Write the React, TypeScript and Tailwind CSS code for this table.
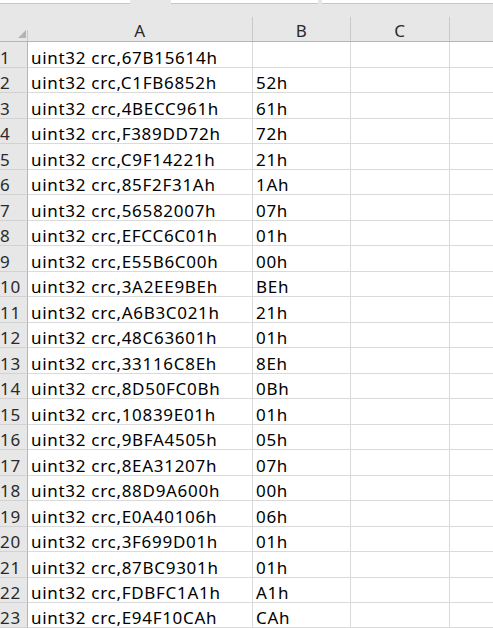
import React from "react";

const rows: [string, string][] = [
  ["67B15614h", ""],
  ["C1FB6852h", "52h"],
  ["4BECC961h", "61h"],
  ["F389DD72h", "72h"],
  ["C9F14221h", "21h"],
  ["85F2F31Ah", "1Ah"],
  ["56582007h", "07h"],
  ["EFCC6C01h", "01h"],
  ["E55B6C00h", "00h"],
  ["3A2EE9BEh", "BEh"],
  ["A6B3C021h", "21h"],
  ["48C63601h", "01h"],
  ["33116C8Eh", "8Eh"],
  ["8D50FC0Bh", "0Bh"],
  ["10839E01h", "01h"],
  ["9BFA4505h", "05h"],
  ["8EA31207h", "07h"],
  ["88D9A600h", "00h"],
  ["E0A40106h", "06h"],
  ["3F699D01h", "01h"],
  ["87BC9301h", "01h"],
  ["FDBFC1A1h", "A1h"],
  ["E94F10CAh", "CAh"],
];

const font = { fontFamily: '"Noto Sans", "Liberation Sans", sans-serif' };

// small divider between column headings, starts part way down
const HeadDivider = () => <div className="w-px h-[24px] self-end bg-[#c9c9c9]" />;

const App: React.FC = () => {
  return (
    <div className="w-[493px] h-[628px] overflow-hidden bg-white" style={font}>
      {/* strip above the headings */}
      <div className="flex h-[4px] bg-[#e7e7e7]">
        <div className="w-[130px] bg-white border-b border-[#c6c6c6]" />
        <div className="w-[41px]" />
        <div className="w-[147px] bg-white border-b border-[#c6c6c6]" />
        <div className="w-[4px]" />
        <div className="flex-1 bg-white border-b border-[#c6c6c6]" />
      </div>

      {/* column headings */}
      <div className="flex h-[38px] bg-[#e7e7e7] border-b border-[#b5b5b5] text-[17px] text-[#2a2a2a] tracking-[0.7px]">
        <div className="w-[27px] flex items-end justify-end pb-[2px]">
          <svg width="10" height="10" viewBox="0 0 10 10">
            <polygon points="1,9 9,9 9,1" fill="#b3b3b3" />
          </svg>
        </div>
        <div className="w-px h-[11px] self-end bg-[#c9c9c9]" />
        <div className="w-[224px] flex items-end justify-center pb-[1px] leading-[18px]">A</div>
        <HeadDivider />
        <div className="w-[97px] flex items-end justify-center pb-[1px] leading-[18px]">B</div>
        <HeadDivider />
        <div className="w-[98px] flex items-end justify-center pb-[1px] leading-[18px]">C</div>
        <HeadDivider />
        <div className="flex-1" />
      </div>

      {/* data rows */}
      {rows.map(([a, b], i) => (
        <div
          key={i}
          className={`flex ${i % 2 === 0 && i < 22 ? "h-[26px]" : "h-[25px]"} text-[17px] leading-[18px] tracking-[0.7px]`}
        >
          <div className="w-[28px] shrink-0 flex items-end bg-[#e7e7e7] border-r border-b border-r-[#b5b5b5] border-b-[#d2d2d2] text-[#2a2a2a]">
            {i + 1}
          </div>
          <div className="w-[225px] shrink-0 flex items-end pl-[3px] border-r border-b border-[#dadada] text-black whitespace-nowrap">
            uint32 crc,{a}
          </div>
          <div className="w-[98px] shrink-0 flex items-end pl-[3px] border-r border-b border-[#dadada] text-black">
            {b}
          </div>
          <div className="w-[99px] shrink-0 border-r border-b border-[#dadada]" />
          <div className="flex-1 border-b border-[#dadada]" />
        </div>
      ))}
    </div>
  );
};

export default App;
